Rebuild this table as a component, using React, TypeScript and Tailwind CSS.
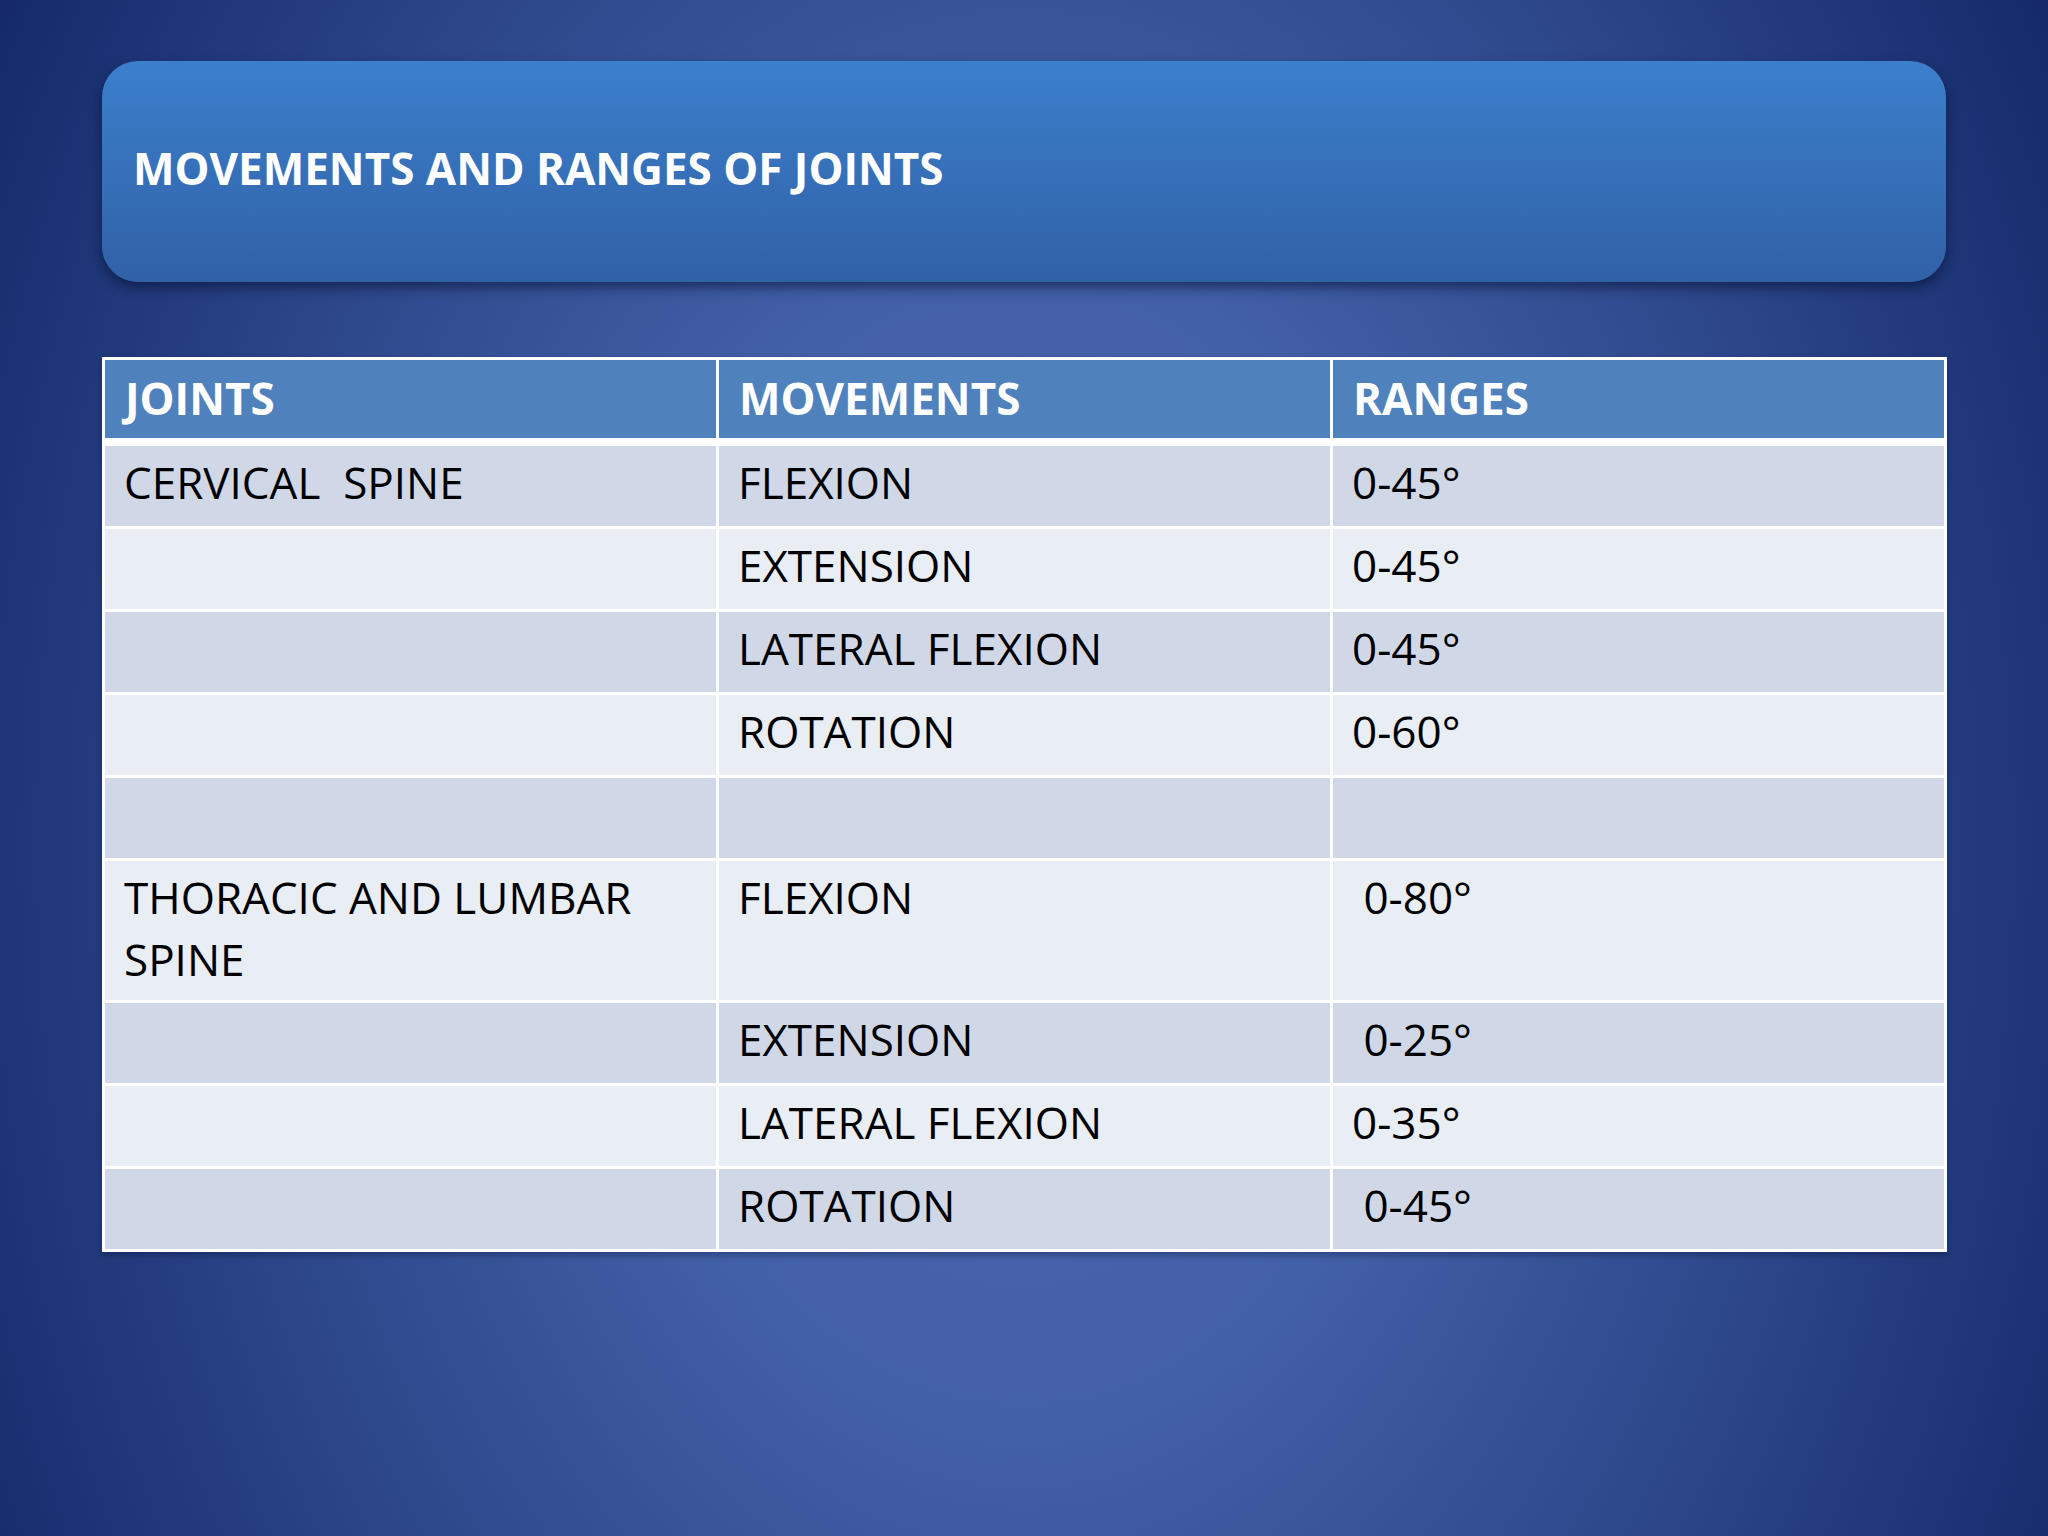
import React from "react";

type Row = { joint: string; move: string; range: string; tall?: boolean };

const rows: Row[] = [
  { joint: "CERVICAL  SPINE", move: "FLEXION", range: "0-45°" },
  { joint: "", move: "EXTENSION", range: "0-45°" },
  { joint: "", move: "LATERAL FLEXION", range: "0-45°" },
  { joint: "", move: "ROTATION", range: "0-60°" },
  { joint: "", move: "", range: "" },
  { joint: "THORACIC AND LUMBAR SPINE", move: "FLEXION", range: " 0-80°", tall: true },
  { joint: "", move: "EXTENSION", range: " 0-25°" },
  { joint: "", move: "LATERAL FLEXION", range: "0-35°" },
  { joint: "", move: "ROTATION", range: " 0-45°" },
];

export default function App() {
  return (
    <div className="w-[2048px] h-[1536px] overflow-hidden bg-[radial-gradient(ellipse_58%_110%_at_50%_55%,#4d68b1_0%,#4260a7_35%,#2b4588_68%,#15296a_100%)] pl-[102px] pt-[61px] font-['Open_Sans',sans-serif]">
      <div className="w-[1844px] h-[221px] rounded-[36px] bg-[linear-gradient(180deg,#3b7fcd_0%,#3670b9_50%,#3061a7_100%)] shadow-[0_6px_12px_rgba(5,15,50,0.55)] flex items-center pl-[31px]">
        <h1 className="text-white font-bold text-[44px] leading-[60px] mt-[-7px] whitespace-pre">
          MOVEMENTS AND RANGES OF JOINTS
        </h1>
      </div>

      <div className="mt-[75px] w-[1845px] bg-white p-[3px] shadow-[0_3px_6px_rgba(5,15,50,0.35)]">
        <div className="grid grid-cols-3 gap-x-[3px] bg-white">
          {["JOINTS", "MOVEMENTS", "RANGES"].map((h) => (
            <div
              key={h}
              className="h-[78px] bg-[#4f81bd] pl-[20px] pt-[7px] text-white font-bold text-[44px] leading-[62px]"
            >
              {h}
            </div>
          ))}
        </div>
        <div className="h-[8px]" />
        <div className="flex flex-col gap-y-[3px]">
          {rows.map((r, i) => {
            const bg = i % 2 === 0 ? "bg-[#d0d8e8]" : "bg-[#e9edf4]";
            return (
              <div key={i} className="grid grid-cols-3 gap-x-[3px]">
                {[r.joint, r.move, r.range].map((t, j) => (
                  <div
                    key={j}
                    className={`${bg} ${r.tall ? "h-[139px]" : "h-[80px]"} pl-[19px] pr-[40px] pt-[5px] text-black text-[44px] leading-[62px] whitespace-pre-wrap`}
                  >
                    {t}
                  </div>
                ))}
              </div>
            );
          })}
        </div>
      </div>
    </div>
  );
}
